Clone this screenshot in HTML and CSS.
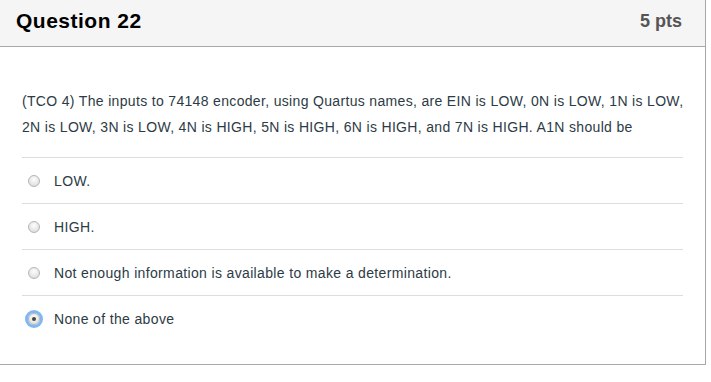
FILE: index.html
```html
<!DOCTYPE html>
<html>
<head>
<meta charset="utf-8">
<link rel="stylesheet" href="styles.css">
</head>
<body>
<div class="panel">
  <div class="header">
    <span class="title">Question 22</span>
    <span class="pts">5 pts</span>
  </div>
  <div class="content">
    <p class="question">(TCO 4) The inputs to 74148 encoder, using Quartus names, are EIN is LOW, 0N is LOW, 1N is LOW,<br>2N is LOW, 3N is LOW, 4N is HIGH, 5N is HIGH, 6N is HIGH, and 7N is HIGH. A1N should be</p>
    <div class="answers">
      <div class="answer"><span class="radio"></span><span class="label">LOW.</span></div>
      <div class="answer"><span class="radio"></span><span class="label">HIGH.</span></div>
      <div class="answer"><span class="radio"></span><span class="label">Not enough information is available to make a determination.</span></div>
      <div class="answer"><span class="radio checked"></span><span class="label">None of the above</span></div>
    </div>
  </div>
</div>
</body>
</html>
```
FILE: styles.css
```css
html, body { margin: 0; padding: 0; background: #fff; }
body { font-family: "Liberation Sans", Arial, sans-serif; color: #2d3b45; }
.panel {
  width: 705px;
  border-right: 1px solid #a8a8a8;
  border-bottom: 1px solid #a8a8a8;
}
.header {
  height: 47px;
  background: #f5f5f5;
  border-bottom: 1px solid #a8a8a8;
  display: flex;
  align-items: center;
  justify-content: space-between;
  padding: 0 23px 4px 16px;
  box-sizing: border-box;
}
.title { font-weight: bold; font-size: 21px; color: #000; letter-spacing: 0.5px; }
.pts { font-weight: bold; font-size: 18px; color: #555; }
.content { padding: 41px 22px 23px 22px; }
.question { margin: 0; font-size: 14px; line-height: 26px; color: #2d3b45; letter-spacing: 0.33px; white-space: nowrap; }
.answers { margin-top: 17px; }
.answer {
  height: 46px;
  border-top: 1px solid #ddd;
  display: flex;
  align-items: center;
  box-sizing: border-box;
  font-size: 14px;
  letter-spacing: 0.35px;
}
.radio {
  width: 12px; height: 12px;
  border-radius: 50%;
  border: 1px solid #b5b5b5;
  background: radial-gradient(circle at 50% 35%, #fdfdfd 0%, #e6e6e6 60%, #d4d4d4 100%);
  margin-left: 6px;
  margin-right: 14px;
  flex: none;
  box-sizing: border-box;
  position: relative;
}
.radio.checked {
  box-shadow: 0 0 0 3px #7fb7f3;
}
.radio.checked::before {
  content: "";
  position: absolute;
  left: -4px; top: -4px; right: -4px; bottom: -4px;
  border-radius: 4px;
  background: #8ec1f6;
  z-index: -1;
}
.radio.checked::after {
  content: "";
  position: absolute;
  left: 3px; top: 3px; width: 4px; height: 4px;
  border-radius: 50%;
  background: #444;
}
.label { color: #2d3b45; }
```
